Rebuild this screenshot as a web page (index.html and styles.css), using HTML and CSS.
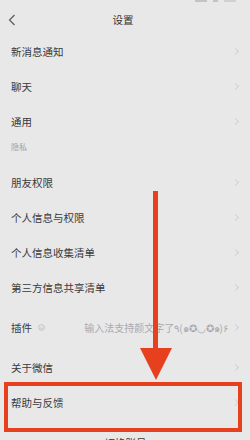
FILE: index.html
```html
<!DOCTYPE html>
<html lang="zh">
<head>
<meta charset="utf-8">
<link rel="stylesheet" href="styles.css">
</head>
<body>
<div class="page">
  <div class="status">
    <span class="si si1"></span><span class="si si2"></span><span class="si si3"></span>
  </div>
  <div class="nav">
    <svg class="back" width="8" height="12" viewBox="0 0 8 12"><path d="M6.5 1 L1.5 6 L6.5 11" fill="none" stroke="#555" stroke-width="1.1"/></svg>
    <div class="title">设置</div>
  </div>

  <div class="group">
    <div class="row"><span class="label">新消息通知</span><span class="chev"></span></div>
    <div class="row"><span class="label">聊天</span><span class="chev"></span></div>
    <div class="row"><span class="label">通用</span><span class="chev"></span></div>
  </div>
  <div class="section">隐私</div>
  <div class="group">
    <div class="row"><span class="label">朋友权限</span><span class="chev"></span></div>
    <div class="row"><span class="label">个人信息与权限</span><span class="chev"></span></div>
    <div class="row"><span class="label">个人信息收集清单</span><span class="chev"></span></div>
    <div class="row"><span class="label">第三方信息共享清单</span><span class="chev"></span></div>
  </div>
  <div class="group gap">
    <div class="row">
      <span class="label">插件</span>
      <svg class="plug" width="7" height="7" viewBox="0 0 7 7"><circle cx="3.5" cy="3.5" r="2.8" fill="none" stroke="#b8b8c0" stroke-width="0.8"/><path d="M2 3.8 Q3.5 5 5 3.8" fill="none" stroke="#b8b8c0" stroke-width="0.7"/></svg>
      <span class="value">输入法支持颜文字了٩(๑✪◡✪๑)۶</span>
      <span class="chev"></span>
    </div>
  </div>
  <div class="group gap">
    <div class="row"><span class="label">关于微信</span><span class="chev"></span></div>
    <div class="row"><span class="label">帮助与反馈</span><span class="chev"></span></div>
  </div>
  <div class="group gap">
    <div class="row center"><span class="label">切换账号</span></div>
  </div>

  <div class="arrow">
    <div class="shaft"></div>
    <div class="head"></div>
  </div>
  <div class="highlight"></div>
</div>
</body>
</html>
```

FILE: styles.css
```css
* { box-sizing: border-box; }
html, body { margin: 0; padding: 0; }
body {
  background: #e8e8e8;
  font-family: "Noto Sans CJK SC", "Noto Sans", sans-serif;
  color: #3a3a3a;
  width: 250px;
  height: 440px;
  overflow: hidden;
}
.page { position: relative; width: 250px; height: 440px; }
.status {
  height: 4px;
  display: flex;
  justify-content: flex-end;
  gap: 6px;
  padding-right: 14px;
}
.si { display: block; height: 2px; background: #c4c4c8; }
.si1 { width: 12px; }
.si2 { width: 5px; }
.si3 { width: 12px; background: #d0d0d4; }
.nav {
  height: 30px;
  display: flex;
  align-items: center;
  justify-content: center;
  position: relative;
}
.back { position: absolute; left: 8px; top: 10px; }
.title { font-size: 10.5px; color: #333; margin-left: -4px; }
.group { display: flex; flex-direction: column; }
.group.gap { margin-top: 5px; }
.row {
  height: 35px;
  display: flex;
  align-items: center;
  padding: 0 10px 0 11px;
  font-size: 10.5px;
}
.row.center { justify-content: center; }
.label { flex: none; }
.chev {
  margin-left: auto;
  width: 5px; height: 5px;
  border-top: 1px solid #d2d2d6;
  border-right: 1px solid #d2d2d6;
  transform: rotate(45deg);
  margin-right: 2px;
}
.section {
  height: 26px;
  font-size: 8px;
  color: #a0a0a8;
  padding: 2px 0 0 11px;
}
.plug { margin-left: 6px; flex: none; }
.value {
  margin-left: auto;
  margin-right: 5px;
  color: #a8a8b0;
  font-size: 10px;
  white-space: nowrap;
}
.value + .chev { margin-left: 0; }
.arrow {
  position: absolute;
  left: 139px;
  top: 191px;
  width: 33px;
  display: flex;
  flex-direction: column;
  align-items: center;
}
.shaft { width: 5px; height: 157px; background: #e6401e; }
.head {
  width: 0; height: 0;
  border-left: 16.5px solid transparent;
  border-right: 16.5px solid transparent;
  border-top: 32px solid #e6401e;
}
.highlight {
  position: absolute;
  left: 4px;
  top: 382px;
  width: 238px;
  height: 50px;
  border: 4px solid #e6401e;
}
```
